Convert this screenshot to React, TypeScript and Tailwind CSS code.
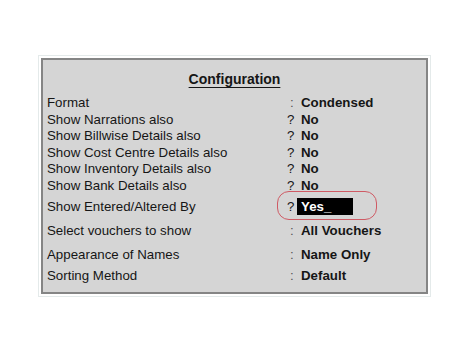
import React from 'react';

type Row = { label: string; mark: '?' | ':'; value: string; h: string };

const rows: Row[] = [
  { label: 'Format', mark: ':', value: 'Condensed', h: 'h-[16.5px]' },
  { label: 'Show Narrations also', mark: '?', value: 'No', h: 'h-[16.5px]' },
  { label: 'Show Billwise Details also', mark: '?', value: 'No', h: 'h-[16.5px]' },
  { label: 'Show Cost Centre Details also', mark: '?', value: 'No', h: 'h-[16.5px]' },
  { label: 'Show Inventory Details also', mark: '?', value: 'No', h: 'h-[16.5px]' },
  { label: 'Show Bank Details also', mark: '?', value: 'No', h: 'h-[16.5px]' },
];

const lower: Row[] = [
  { label: 'Select vouchers to show', mark: ':', value: 'All Vouchers', h: 'h-[24px]' },
  { label: 'Appearance of Names', mark: ':', value: 'Name Only', h: 'h-[24px]' },
  { label: 'Sorting Method', mark: ':', value: 'Default', h: 'h-[17px]' },
];

function Line({ row }: { row: Row }) {
  return (
    <div className={`flex items-center ${row.h}`}>
      <span className="w-[240px]">{row.label}</span>
      <span className={`w-[14px] ${row.mark === ':' ? 'pl-[3px] text-[#555]' : ''}`}>{row.mark}</span>
      <span className="font-bold">{row.value}</span>
    </div>
  );
}

export default function App() {
  return (
    <div className="w-[474px] h-[355px] bg-white pt-[58px] pl-[41px] font-['Liberation_Sans',Arial,sans-serif] text-[13.3px] text-[#161616] leading-none">
      <div className="w-[387px] h-[236px] bg-[#d5d5d5] border-2 border-[#858585] outline-1 outline-offset-2 outline-[#e4eaea] pl-[4px]">
        {/* Title */}
        <div className="mt-[9px] h-[20px] flex items-center justify-center pr-[4px]">
          <span className="text-[14px] font-bold underline underline-offset-[3px]">Configuration</span>
        </div>

        <div className="mt-[5.75px]">
          {rows.map((r) => (
            <Line key={r.label} row={r} />
          ))}

          {/* Highlighted option */}
          <div className="relative flex items-center h-[25px]">
            <span className="w-[240px]">Show Entered/Altered By</span>
            <span className="w-[10px]">?</span>
            <span className="w-[56px] h-[17px] bg-black text-white font-bold flex items-center pl-[4px]">
              Yes_
            </span>
            <div className="absolute left-[230px] top-[-3px] w-[100px] h-[29px] rounded-[12px] border-[1.5px] border-[#cf5a64]" />
          </div>

          {lower.map((r) => (
            <Line key={r.label} row={r} />
          ))}
        </div>
      </div>
    </div>
  );
}
